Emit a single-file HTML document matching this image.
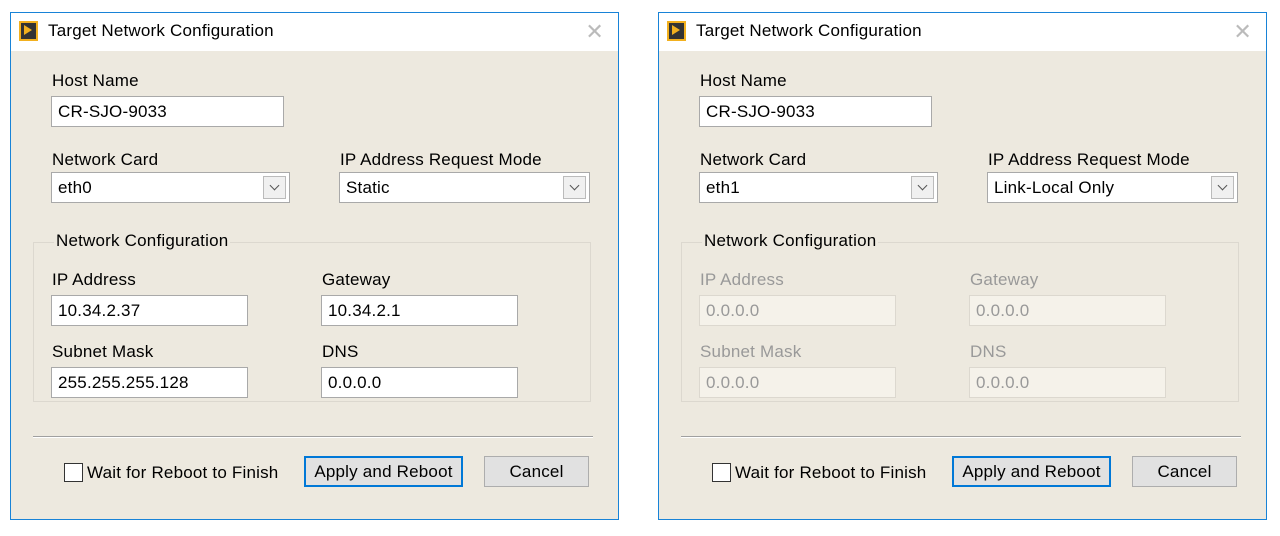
<!DOCTYPE html>
<html><head><meta charset="utf-8"><style>
*{box-sizing:border-box;margin:0;padding:0}
body{width:1280px;height:536px;background:#fff;font-family:"Liberation Sans",sans-serif;font-size:17px;letter-spacing:0.2px;color:#000;position:relative;overflow:hidden}
.win{position:absolute;top:12px;width:609px;height:508px;border:1px solid #1883d7;background:#ede9df}
.tb{position:absolute;left:0;top:0;right:0;height:38px;background:#fff}
.tt{position:absolute;left:37px;top:8px;font-size:17px}
.x{position:absolute;right:14px;top:6px;color:#bbb;font-size:22px}
.ic{position:absolute;left:8px;top:8px;width:19px;height:20px;background:#f2b01e}
.ic i{position:absolute;left:2px;top:2px;width:15px;height:16px;background:#333}
.ic b{position:absolute;left:5px;top:4px;width:0;height:0;border-left:8px solid #f2b01e;border-top:5px solid transparent;border-bottom:5px solid transparent}
.a{position:absolute;white-space:nowrap}
.in{position:absolute;height:31px;background:#fff;border:1px solid #a9a9a9;padding:5px 0 0 6px}
.dis{background:#f5f2ea;border-color:#dcd8cf;color:#999}
.lbd{color:#999}
.dd{position:absolute;right:3px;top:3px;width:23px;height:23px;border:1px solid #bbb;background:#f0f0f0}
.dd:after{content:"";position:absolute;left:7px;top:5px;width:6px;height:6px;border-right:1px solid #555;border-bottom:1px solid #555;transform:rotate(45deg)}
.grp{position:absolute;left:22px;top:229px;width:558px;height:160px;border:1px solid #dcd8cf}
.gl{position:absolute;left:20px;top:-12px;background:#ede9df;padding:0 2px}
.sep{position:absolute;left:22px;top:423px;width:560px;height:2px;border-top:1px solid #a0a0a0;border-bottom:1px solid #fff}
.cb{position:absolute;left:53px;top:450px;width:19px;height:19px;border:1px solid #333;background:#fff}
.btn{position:absolute;top:443px;height:31px;background:#e1e1e1;border:1px solid #adadad;text-align:center;padding-top:5px}
.pri{border:2px solid #0078d7;padding-top:4px}
</style></head><body>

<div class="win" style="left:10px">
<div class="tb"><div class="ic"><i></i><b></b></div><div class="tt">Target Network Configuration</div><div class="x">✕</div></div>
<div class="a" style="left:41px;top:58px">Host Name</div>
<div class="in" style="left:40px;top:83px;width:233px">CR-SJO-9033</div>
<div class="a" style="left:41px;top:137px">Network Card</div>
<div class="in" style="left:40px;top:159px;width:239px">eth0<div class="dd"></div></div>
<div class="a" style="left:329px;top:137px">IP Address Request Mode</div>
<div class="in" style="left:328px;top:159px;width:251px">Static<div class="dd"></div></div>
<div class="grp"><div class="gl">Network Configuration</div></div>
<div class="a" style="left:41px;top:257px">IP Address</div>
<div class="in" style="left:40px;top:282px;width:197px">10.34.2.37</div>
<div class="a" style="left:311px;top:257px">Gateway</div>
<div class="in" style="left:310px;top:282px;width:197px">10.34.2.1</div>
<div class="a" style="left:41px;top:329px">Subnet Mask</div>
<div class="in" style="left:40px;top:354px;width:197px">255.255.255.128</div>
<div class="a" style="left:311px;top:329px">DNS</div>
<div class="in" style="left:310px;top:354px;width:197px">0.0.0.0</div>
<div class="sep"></div>
<div class="cb"></div><div class="a" style="left:76px;top:450px">Wait for Reboot to Finish</div>
<div class="btn pri" style="left:293px;width:159px">Apply and Reboot</div>
<div class="btn" style="left:473px;width:105px">Cancel</div>
</div>

<div class="win" style="left:658px">
<div class="tb"><div class="ic"><i></i><b></b></div><div class="tt">Target Network Configuration</div><div class="x">✕</div></div>
<div class="a" style="left:41px;top:58px">Host Name</div>
<div class="in" style="left:40px;top:83px;width:233px">CR-SJO-9033</div>
<div class="a" style="left:41px;top:137px">Network Card</div>
<div class="in" style="left:40px;top:159px;width:239px">eth1<div class="dd"></div></div>
<div class="a" style="left:329px;top:137px">IP Address Request Mode</div>
<div class="in" style="left:328px;top:159px;width:251px">Link-Local Only<div class="dd"></div></div>
<div class="grp"><div class="gl">Network Configuration</div></div>
<div class="a lbd" style="left:41px;top:257px">IP Address</div>
<div class="in dis" style="left:40px;top:282px;width:197px">0.0.0.0</div>
<div class="a lbd" style="left:311px;top:257px">Gateway</div>
<div class="in dis" style="left:310px;top:282px;width:197px">0.0.0.0</div>
<div class="a lbd" style="left:41px;top:329px">Subnet Mask</div>
<div class="in dis" style="left:40px;top:354px;width:197px">0.0.0.0</div>
<div class="a lbd" style="left:311px;top:329px">DNS</div>
<div class="in dis" style="left:310px;top:354px;width:197px">0.0.0.0</div>
<div class="sep"></div>
<div class="cb"></div><div class="a" style="left:76px;top:450px">Wait for Reboot to Finish</div>
<div class="btn pri" style="left:293px;width:159px">Apply and Reboot</div>
<div class="btn" style="left:473px;width:105px">Cancel</div>
</div>

</body></html>
